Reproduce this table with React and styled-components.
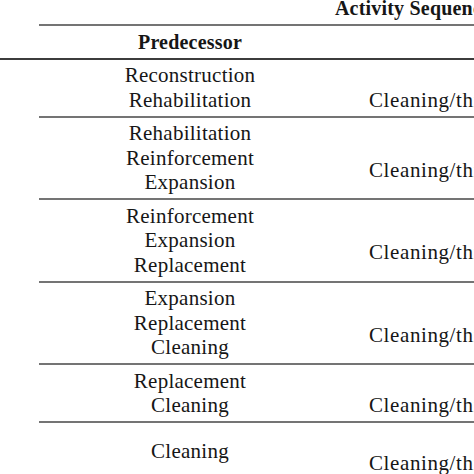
import React from "react";
import styled, { createGlobalStyle } from "styled-components";

const GlobalStyle = createGlobalStyle`
  html, body {
    margin: 0;
    padding: 0;
    background: #ffffff;
    overflow: hidden;
  }
  body {
    font-family: "Liberation Serif", "Times New Roman", serif;
  }
`;

const Table = styled.table`
  border-collapse: collapse;
  table-layout: fixed;
  width: 787px;
  margin-top: -8px;
  color: #161616;
  font-size: 21px;
  line-height: 24.5px;
  letter-spacing: 0.25px;
`;

const rules = {
  none: "none",
  thin: "2px solid #747474",
  mid: "2px solid #3c3c3c",
};

const HeadCell = styled.th`
  font-weight: bold;
  font-size: 20px;
  letter-spacing: 0.2px;
  text-align: center;
  padding: ${(p) => (p.$compact ? "4px 0 3px" : "4px 0 3.5px")};
  border-bottom: ${(p) => rules[p.$rule || "none"]};
`;

const Cell = styled.td`
  padding: 3.5px 0;
  vertical-align: middle;
  text-align: ${(p) => (p.$align === "left" ? "left" : "center")};
  padding-left: ${(p) => (p.$align === "left" ? "28px" : "0")};
  letter-spacing: ${(p) => (p.$align === "left" ? "0.6px" : "0.25px")};
  white-space: nowrap;
  border-bottom: ${(p) => rules[p.$rule || "none"]};
`;

const Line = styled.span`
  display: block;
`;

const rows = [
  ["Reconstruction", "Rehabilitation"],
  ["Rehabilitation", "Reinforcement", "Expansion"],
  ["Reinforcement", "Expansion", "Replacement"],
  ["Expansion", "Replacement", "Cleaning"],
  ["Replacement", "Cleaning"],
  ["Cleaning"],
];

export default function App() {
  return (
    <>
      <GlobalStyle />
      <Table>
        <colgroup>
          <col style={{ width: 39 }} />
          <col style={{ width: 302 }} />
          <col style={{ width: 446 }} />
        </colgroup>
        <thead>
          <tr>
            <HeadCell />
            <HeadCell colSpan={2} $rule="thin">
              Activity Sequence
            </HeadCell>
          </tr>
          <tr>
            <HeadCell $rule="mid" $compact />
            <HeadCell $rule="mid" $compact>
              Predecessor
            </HeadCell>
            <HeadCell $rule="mid" $compact />
          </tr>
        </thead>
        <tbody>
          {rows.map((lines, i) => (
            <tr key={i}>
              <Cell />
              <Cell $rule="thin">
                {lines.map((l) => (
                  <Line key={l}>{l}</Line>
                ))}
              </Cell>
              <Cell $rule="thin" $align="left">
                <Line>{"\u00a0"}</Line>
                <Line>Cleaning/thinning</Line>
              </Cell>
            </tr>
          ))}
        </tbody>
      </Table>
    </>
  );
}
